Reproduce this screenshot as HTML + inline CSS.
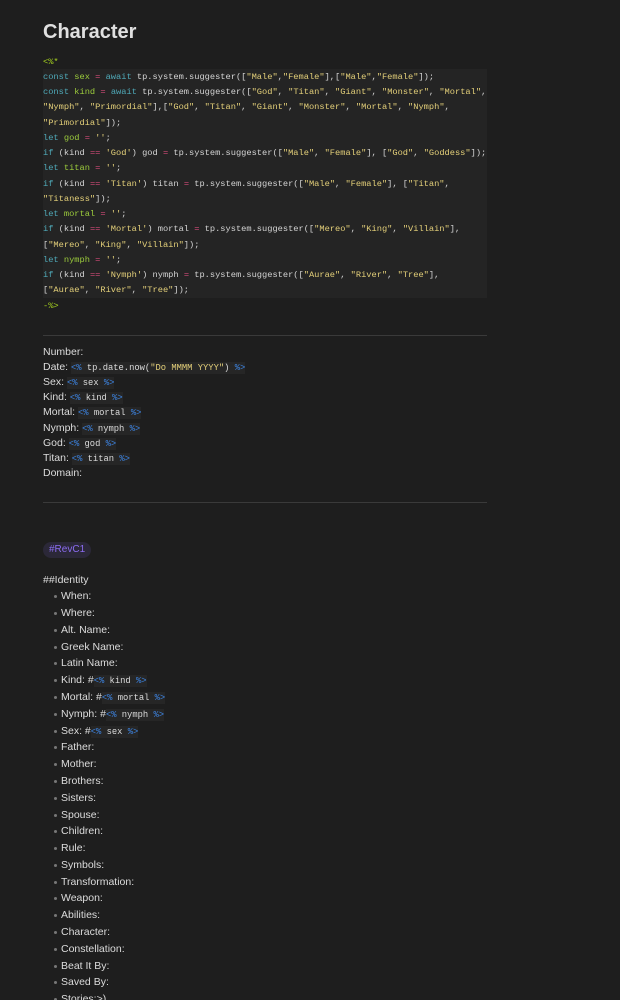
<!DOCTYPE html>
<html><head><meta charset="utf-8"><style>
html,body{margin:0;padding:0;background:#1e1e1e;width:620px;height:1000px;overflow:hidden}
body{position:relative;font-family:"Liberation Sans",sans-serif;color:#dcdcdc}
.l{position:absolute;left:43px;white-space:pre;font-size:10.5px;line-height:15px}
.c{position:absolute;left:43px;white-space:pre;font-family:"Liberation Mono",monospace;font-size:8.7px;line-height:15px;color:#d4d4d4}
.k{color:#4fa9b8}.v{color:#9ccc3c}.o{color:#d24a78}.s{color:#e3cf79}
.t{color:#3d86e6}.m{font-family:"Liberation Mono",monospace;font-size:8.8px;background:#262626;padding:1px 0}
.hr{position:absolute;left:43px;width:444px;height:1px;background:#3a3a3a}
.li{position:absolute;left:61px;white-space:pre;font-size:10.5px;line-height:15px}
.li:before{content:"";position:absolute;left:-7px;top:6px;width:3px;height:3px;border-radius:50%;background:#777}
</style></head><body>
<div style="position:absolute;left:43px;top:21px;font-size:20px;font-weight:bold;color:#e0e0e0">Character</div>
<div style="position:absolute;left:43px;top:69px;width:444px;height:229px;background:#242424"></div>
<div class="c" style="top:55px;color:#a8d520">&lt;%*</div>
<div class="c" style="top:70px"><span class="k">const</span> <span class="v">sex</span> <span class="o">=</span> <span class="k">await</span> tp.system.suggester([<span class="s">"Male"</span>,<span class="s">"Female"</span>],[<span class="s">"Male"</span>,<span class="s">"Female"</span>]);</div>
<div class="c" style="top:85px"><span class="k">const</span> <span class="v">kind</span> <span class="o">=</span> <span class="k">await</span> tp.system.suggester([<span class="s">"God"</span>, <span class="s">"Titan"</span>, <span class="s">"Giant"</span>, <span class="s">"Monster"</span>, <span class="s">"Mortal"</span>,</div>
<div class="c" style="top:100px"><span class="s">"Nymph"</span>, <span class="s">"Primordial"</span>],[<span class="s">"God"</span>, <span class="s">"Titan"</span>, <span class="s">"Giant"</span>, <span class="s">"Monster"</span>, <span class="s">"Mortal"</span>, <span class="s">"Nymph"</span>,</div>
<div class="c" style="top:116px"><span class="s">"Primordial"</span>]);</div>
<div class="c" style="top:131px"><span class="k">let</span> <span class="v">god</span> <span class="o">=</span> <span class="s">''</span>;</div>
<div class="c" style="top:146px"><span class="k">if</span> (kind <span class="o">==</span> <span class="s">'God'</span>) god <span class="o">=</span> tp.system.suggester([<span class="s">"Male"</span>, <span class="s">"Female"</span>], [<span class="s">"God"</span>, <span class="s">"Goddess"</span>]);</div>
<div class="c" style="top:161px"><span class="k">let</span> <span class="v">titan</span> <span class="o">=</span> <span class="s">''</span>;</div>
<div class="c" style="top:177px"><span class="k">if</span> (kind <span class="o">==</span> <span class="s">'Titan'</span>) titan <span class="o">=</span> tp.system.suggester([<span class="s">"Male"</span>, <span class="s">"Female"</span>], [<span class="s">"Titan"</span>,</div>
<div class="c" style="top:192px"><span class="s">"Titaness"</span>]);</div>
<div class="c" style="top:207px"><span class="k">let</span> <span class="v">mortal</span> <span class="o">=</span> <span class="s">''</span>;</div>
<div class="c" style="top:222px"><span class="k">if</span> (kind <span class="o">==</span> <span class="s">'Mortal'</span>) mortal <span class="o">=</span> tp.system.suggester([<span class="s">"Mereo"</span>, <span class="s">"King"</span>, <span class="s">"Villain"</span>],</div>
<div class="c" style="top:238px">[<span class="s">"Mereo"</span>, <span class="s">"King"</span>, <span class="s">"Villain"</span>]);</div>
<div class="c" style="top:253px"><span class="k">let</span> <span class="v">nymph</span> <span class="o">=</span> <span class="s">''</span>;</div>
<div class="c" style="top:268px"><span class="k">if</span> (kind <span class="o">==</span> <span class="s">'Nymph'</span>) nymph <span class="o">=</span> tp.system.suggester([<span class="s">"Aurae"</span>, <span class="s">"River"</span>, <span class="s">"Tree"</span>],</div>
<div class="c" style="top:283px">[<span class="s">"Aurae"</span>, <span class="s">"River"</span>, <span class="s">"Tree"</span>]);</div>
<div class="c" style="top:299px;color:#a8d520">-%&gt;</div>
<div class="hr" style="top:335px"></div>
<div class="l" style="top:345px">Number:</div>
<div class="l" style="top:360px">Date: <span class="m"><span class="t">&lt;%</span> tp.date.now(<span class="s">"Do MMMM YYYY"</span>) <span class="t">%&gt;</span></span></div>
<div class="l" style="top:375px">Sex: <span class="m"><span class="t">&lt;%</span> sex <span class="t">%&gt;</span></span></div>
<div class="l" style="top:390px">Kind: <span class="m"><span class="t">&lt;%</span> kind <span class="t">%&gt;</span></span></div>
<div class="l" style="top:405px">Mortal: <span class="m"><span class="t">&lt;%</span> mortal <span class="t">%&gt;</span></span></div>
<div class="l" style="top:421px">Nymph: <span class="m"><span class="t">&lt;%</span> nymph <span class="t">%&gt;</span></span></div>
<div class="l" style="top:436px">God: <span class="m"><span class="t">&lt;%</span> god <span class="t">%&gt;</span></span></div>
<div class="l" style="top:451px">Titan: <span class="m"><span class="t">&lt;%</span> titan <span class="t">%&gt;</span></span></div>
<div class="l" style="top:466px">Domain:</div>
<div class="hr" style="top:502px"></div>
<div style="position:absolute;left:43px;top:542px;height:16px;padding:0 6px;border-radius:8px;background:#2b2838;color:#8b6cf0;font-size:10px;line-height:16px">#RevC1</div>
<div class="l" style="top:573px">##Identity</div>
<div class="li" style="top:589px">When:</div>
<div class="li" style="top:606px">Where:</div>
<div class="li" style="top:623px">Alt. Name:</div>
<div class="li" style="top:640px">Greek Name:</div>
<div class="li" style="top:656px">Latin Name:</div>
<div class="li" style="top:673px">Kind: #<span class="m"><span class="t">&lt;%</span> kind <span class="t">%&gt;</span></span></div>
<div class="li" style="top:690px">Mortal: #<span class="m"><span class="t">&lt;%</span> mortal <span class="t">%&gt;</span></span></div>
<div class="li" style="top:707px">Nymph: #<span class="m"><span class="t">&lt;%</span> nymph <span class="t">%&gt;</span></span></div>
<div class="li" style="top:724px">Sex: #<span class="m"><span class="t">&lt;%</span> sex <span class="t">%&gt;</span></span></div>
<div class="li" style="top:740px">Father:</div>
<div class="li" style="top:757px">Mother:</div>
<div class="li" style="top:774px">Brothers:</div>
<div class="li" style="top:791px">Sisters:</div>
<div class="li" style="top:808px">Spouse:</div>
<div class="li" style="top:824px">Children:</div>
<div class="li" style="top:841px">Rule:</div>
<div class="li" style="top:858px">Symbols:</div>
<div class="li" style="top:875px">Transformation:</div>
<div class="li" style="top:891px">Weapon:</div>
<div class="li" style="top:908px">Abilities:</div>
<div class="li" style="top:925px">Character:</div>
<div class="li" style="top:942px">Constellation:</div>
<div class="li" style="top:959px">Beat It By:</div>
<div class="li" style="top:975px">Saved By:</div>
<div class="li" style="top:992px">Stories:&gt;)</div>
</body></html>
